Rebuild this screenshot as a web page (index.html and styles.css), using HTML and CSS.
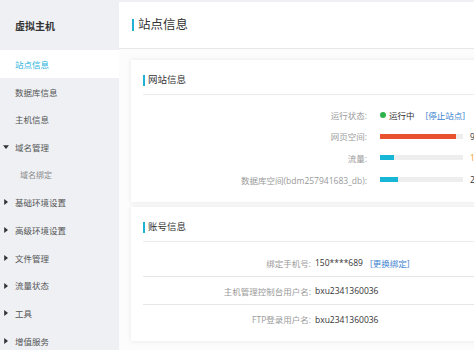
FILE: index.html
```html
<!DOCTYPE html>
<html lang="zh-CN">
<head>
<meta charset="utf-8">
<title>虚拟主机 - 站点信息</title>
<link rel="stylesheet" href="styles.css">
</head>
<body>
<div class="layout">
  <aside class="sidebar">
    <div class="side-head">虚拟主机</div>
    <ul class="menu">
      <li class="item active">站点信息</li>
      <li class="item">数据库信息</li>
      <li class="item">主机信息</li>
      <li class="item"><svg class="tri" viewBox="0 0 6 6"><path d="M0 1.2H6L3 5Z"/></svg>域名管理</li>
      <li class="item sub">域名绑定</li>
      <li class="item"><svg class="tri" viewBox="0 0 6 6"><path d="M1.2 0V6L5 3Z"/></svg>基础环境设置</li>
      <li class="item"><svg class="tri" viewBox="0 0 6 6"><path d="M1.2 0V6L5 3Z"/></svg>高级环境设置</li>
      <li class="item"><svg class="tri" viewBox="0 0 6 6"><path d="M1.2 0V6L5 3Z"/></svg>文件管理</li>
      <li class="item"><svg class="tri" viewBox="0 0 6 6"><path d="M1.2 0V6L5 3Z"/></svg>流量状态</li>
      <li class="item"><svg class="tri" viewBox="0 0 6 6"><path d="M1.2 0V6L5 3Z"/></svg>工具</li>
      <li class="item"><svg class="tri" viewBox="0 0 6 6"><path d="M1.2 0V6L5 3Z"/></svg>增值服务</li>
    </ul>
  </aside>
  <main class="main">
    <header class="page-head"><h1 class="page-title">站点信息</h1></header>
    <div class="content">
      <section class="card">
        <div class="card-head"><h2 class="card-title">网站信息</h2></div>
        <div class="card-body site">
          <div class="row">
            <span class="label">运行状态:</span>
            <span class="value"><i class="dot"></i>运行中<a class="link status-link">[停止站点]</a></span>
          </div>
          <div class="row">
            <span class="label">网页空间:</span>
            <span class="value"><span class="track"><span class="fill red" style="width:92%"></span></span><span class="pct">92.4%</span></span>
          </div>
          <div class="row">
            <span class="label">流量:</span>
            <span class="value"><span class="track"><span class="fill blue" style="width:17%"></span></span><span class="pct warn">17.2%</span></span>
          </div>
          <div class="row">
            <span class="label">数据库空间(bdm257941683_db):</span>
            <span class="value"><span class="track"><span class="fill blue" style="width:22%"></span></span><span class="pct">21.6%</span></span>
          </div>
        </div>
      </section>
      <section class="card">
        <div class="card-head"><h2 class="card-title">账号信息</h2></div>
        <div class="card-body account">
          <div class="row">
            <span class="label">绑定手机号:</span>
            <span class="value">150****689<a class="link bind-link">[更换绑定]</a></span>
          </div>
          <div class="row">
            <span class="label">主机管理控制台用户名:</span>
            <span class="value">bxu2341360036</span>
          </div>
          <div class="row">
            <span class="label">FTP登录用户名:</span>
            <span class="value">bxu2341360036</span>
          </div>
        </div>
      </section>
    </div>
  </main>
</div>
</body>
</html>
```
FILE: styles.css
```css
* { box-sizing: border-box; }
html, body { margin: 0; padding: 0; }
body {
  width: 474px;
  height: 350px;
  overflow: hidden;
  font-family: "Open Sans", "Noto Sans CJK SC", sans-serif;
  color: #333;
  background: #fff;
}
.layout { display: flex; height: 350px; }

.sidebar {
  width: 119px;
  flex: none;
  background: #eef0f4;
}
.side-head {
  height: 50px;
  padding-left: 15px;
  display: flex;
  align-items: center;
  font-size: 10px;
  font-weight: bold;
  color: #333;
}
.menu { list-style: none; margin: 0; padding: 0; }
.item {
  position: relative;
  height: 27.7px;
  display: flex;
  align-items: center;
  padding-left: 15px;
  font-size: 8.5px;
  color: #555;
}
.item.active { background: #fff; color: #27b2db; }
.item.sub { padding-left: 20px; color: #8a8a8a; font-size: 8px; }
.tri {
  position: absolute;
  left: 3px;
  top: 11px;
  width: 6px;
  height: 6px;
  fill: #333;
}

.main { flex: 1; min-width: 0; overflow: hidden; background: #fcfcfd; }
.page-head {
  height: 49px;
  border-top: 2px solid #eef0f4;
  border-bottom: 1px solid #e6e8eb;
  background: #fff;
  display: flex;
  align-items: center;
  padding-left: 13px;
}
.page-title {
  margin: 0;
  font-size: 12.5px;
  font-weight: normal;
  color: #333;
  display: flex;
  align-items: center;
  line-height: 14px;
}
.page-title::before {
  content: "";
  width: 2px;
  height: 12px;
  background: #1fb2d5;
  margin-right: 4px;
}

.content {
  padding: 11px 0 0 12px;
  display: flex;
  flex-direction: column;
  gap: 5px;
}
.card {
  width: 420px;
  flex: none;
  background: #fff;
  box-shadow: 0 0 5px rgba(0, 0, 0, 0.09);
  padding: 0 12px;
}
.card-head {
  height: 35px;
  border-bottom: 1px solid #ececec;
  display: flex;
  align-items: center;
  padding-top: 6px;
}
.card-title {
  margin: 0;
  font-size: 9.5px;
  font-weight: normal;
  color: #333;
  display: flex;
  align-items: center;
  line-height: 12px;
}
.card-title::before {
  content: "";
  width: 2px;
  height: 11px;
  background: #1fb2d5;
  margin-right: 3px;
}

.row { display: flex; align-items: center; font-size: 8.5px; }
.label { text-align: right; color: #9a9a9a; flex: none; }
.value { display: flex; align-items: center; color: #333; white-space: nowrap; }

.site { padding: 9px 0 12px; }
.site .row { height: 21.6px; }
.site .label { width: 224px; }
.site .value { margin-left: 13px; }

.dot {
  width: 6px;
  height: 6px;
  border-radius: 50%;
  background: #2fb34a;
  margin-right: 3px;
}
.link { color: #3c82cf; }
.status-link { margin-left: 11px; }
.bind-link { margin-left: 7px; }

.track {
  width: 83px;
  height: 5px;
  background: #eeeeee;
  display: flex;
}
.fill { height: 5px; }
.fill.red { background: #e8522f; }
.fill.blue { background: #17b5d6; }
.pct { margin-left: 7px; color: #333; }
.pct.warn { color: #f0a12a; }

.account { padding: 7px 0 8px; }
.account .row { height: 28px; border-bottom: 1px solid #e6e6e6; }
.account .row:last-child { border-bottom: none; }
.account .label { width: 168px; }
.account .value { margin-left: 4px; }
```
